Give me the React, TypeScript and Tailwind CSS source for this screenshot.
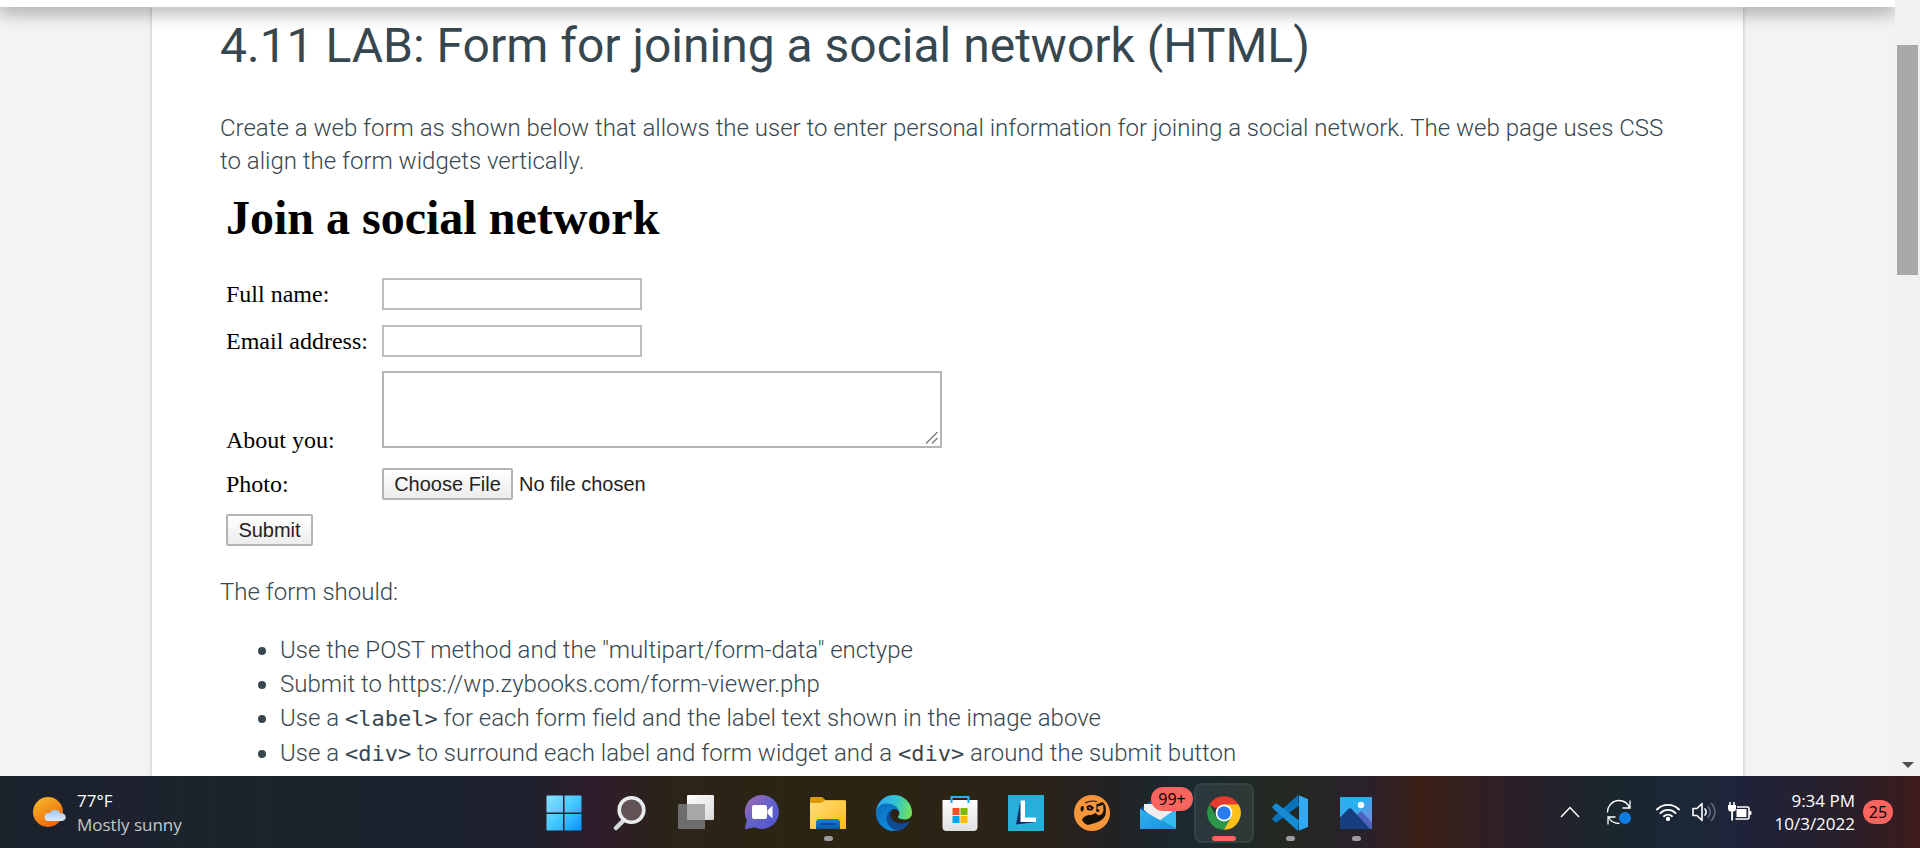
import type { ReactNode } from "react";
import clsx from "clsx";

function Header() {
	return <header className="relative z-10 h-[7px] shrink-0 bg-white shadow-[0_2px_18px_2px_rgba(0,0,0,0.45)]" />;
}

function JoinForm() {
	return (
		<form
			className="mt-3 pl-1.5 font-['Liberation_Serif',serif] text-2xl text-black"
			onSubmit={(e) => e.preventDefault()}
		>
			<h2 className="text-5xl leading-14 font-bold">Join a social network</h2>
			<div className="mt-8 flex h-8 items-center">
				<label htmlFor="fullName" className="w-39 leading-8">
					Full name:
				</label>
				<input id="fullName" type="text" className="h-8 w-[260px] border-2 border-[#bdbdbd] bg-white px-1" />
			</div>
			<div className="mt-[15px] flex h-8 items-center">
				<label htmlFor="email" className="w-39 leading-8">
					Email address:
				</label>
				<input id="email" type="text" className="h-8 w-[260px] border-2 border-[#bdbdbd] bg-white px-1" />
			</div>
			<div className="mt-[14px] flex items-end">
				<label htmlFor="about" className="w-39 leading-4">
					About you:
				</label>
				<div className="relative h-[77px] w-[560px]">
					<textarea id="about" className="h-full w-full resize-none border-2 border-[#b4b4b4] bg-white px-1" />
					<svg className="absolute right-1 bottom-1 h-3 w-3" viewBox="0 0 12 12" stroke="#777" strokeWidth="1.3">
						<path d="M0 11.5 11.5 0M6 11.5 11.5 6" />
					</svg>
				</div>
			</div>
			<div className="mt-5 flex h-8 items-center">
				<label htmlFor="photo" className="w-39 leading-8">
					Photo:
				</label>
				<input
					id="photo"
					type="file"
					className="w-[340px] font-['Liberation_Sans',Arial,sans-serif] text-xl leading-7 text-[#222] file:mr-1.5 file:h-8 file:w-[131px] file:rounded-xs file:border-2 file:border-[#b4b4b4] file:bg-linear-to-b file:from-white file:to-[#ececec] file:p-0 file:text-[#222]"
				/>
			</div>
			<div className="mt-[14px] flex">
				<button
					type="submit"
					className="h-8 w-[87px] rounded-xs border-2 border-[#b4b4b4] bg-linear-to-b from-white to-[#ececec] font-['Liberation_Sans',Arial,sans-serif] text-xl leading-7 text-[#222]"
				>
					Submit
				</button>
			</div>
		</form>
	);
}

function Code({ children }: { children: ReactNode }) {
	return <code className="font-['DejaVu_Sans_Mono',monospace] text-[22px] font-normal">{children}</code>;
}

function Item({ children }: { children: ReactNode }) {
	return (
		<li className="relative before:absolute before:top-[14px] before:-left-[22px] before:size-2 before:rounded-full before:bg-[#37474f]">
			{children}
		</li>
	);
}

function Lab() {
	return (
		<main className="flex min-w-0 flex-1 justify-center overflow-hidden bg-[#f3f3f3]">
			<article className="w-[84%] max-w-[1591px] bg-white px-17 pt-[11px] font-[Roboto,sans-serif] text-2xl leading-[34px] font-light text-[#37474f] shadow-[0_0_4px_rgba(0,0,0,0.25)]">
				<h1 className="text-5xl leading-14 font-normal">4.11 LAB: Form for joining a social network (HTML)</h1>
				<p className="mt-[38px] leading-[33px]">
					Create a web form as shown below that allows the user to enter personal information for joining a social
					network. The web page uses CSS to align the form widgets vertically.
				</p>
				<JoinForm />
				<p className="mt-[30px] leading-[33px]">The form should:</p>
				<ul className="mt-6 pl-15">
					<Item>Use the POST method and the "multipart/form-data" enctype</Item>
					<Item>Submit to https://wp.zybooks.com/form-viewer.php</Item>
					<Item>
						Use a <Code>&lt;label&gt;</Code> for each form field and the label text shown in the image above
					</Item>
					<Item>
						Use a <Code>&lt;div&gt;</Code> to surround each label and form widget and a <Code>&lt;div&gt;</Code> around
						the submit button
					</Item>
				</ul>
			</article>
		</main>
	);
}

function Scrollbar() {
	return (
		<div className="flex w-[25px] shrink-0 flex-col items-center justify-between bg-[#f1f1f1] pt-[45px] pb-2">
			<div className="h-[230px] w-[21px] bg-[#a8a8a8]" />
			<svg className="h-1.5 w-3" viewBox="0 0 12 6" fill="#505050">
				<path d="M0 0h12L6 6z" />
			</svg>
		</div>
	);
}

function StartIcon() {
	return (
		<svg viewBox="0 0 36 36" className="h-9 w-9">
			<defs>
				<linearGradient id="start" x1="0" y1="0" x2="36" y2="36" gradientUnits="userSpaceOnUse">
					<stop stopColor="#8fe1ff" />
					<stop offset=".5" stopColor="#45c8ff" />
					<stop offset="1" stopColor="#0593ff" />
				</linearGradient>
			</defs>
			<path
				fill="url(#start)"
				d="M1.500 .5H17v17H.5v-16a1 1 0 0 1 1-1zM18.500 .5h16a1 1 0 0 1 1 1v16h-17zM.5 19H17v16.500H1.500a1 1 0 0 1-1-1zM18.500 19h17v15.500a1 1 0 0 1-1 1h-16z"
			/>
		</svg>
	);
}

function SearchIcon() {
	return (
		<svg viewBox="0 0 36 36" className="h-9 w-9">
			<path d="M12 25 4 33" stroke="#d5d9dc" strokeWidth="4.500" strokeLinecap="round" />
			<circle cx="19.500" cy="15" r="12.300" fill="#8c7c80" fillOpacity=".55" stroke="#e9ecee" strokeWidth="3.600" />
		</svg>
	);
}

function TaskViewIcon() {
	return (
		<svg viewBox="0 0 36 36" className="h-9 w-9">
			<defs>
				<linearGradient id="tv" x1="0" y1="0" x2="1" y2="1">
					<stop stopColor="#fff" />
					<stop offset="1" stopColor="#d9d9d9" />
				</linearGradient>
			</defs>
			<rect x="9" y="0" width="27" height="25" rx="1.200" fill="url(#tv)" />
			<rect x="0" y="9" width="27" height="25" rx="1.200" fill="#6d6d6d" />
			<path d="M9 9h18v16H10a1 1 0 0 1-1-1z" fill="#a8a8a8" />
		</svg>
	);
}

function ChatIcon() {
	return (
		<svg viewBox="0 0 36 36" className="h-9 w-9">
			<defs>
				<linearGradient id="chat" x1="4" y1="4" x2="28" y2="30" gradientUnits="userSpaceOnUse">
					<stop stopColor="#9a6ab4" />
					<stop offset=".5" stopColor="#6562c8" />
					<stop offset="1" stopColor="#5558cf" />
				</linearGradient>
			</defs>
			<path fill="url(#chat)" d="M18 0a17 17 0 1 1-7.500 32.300L2.500 34c-1 .2-1.700-.5-1.400-1.500l1.700-7.500A17 17 0 0 1 18 0z" />
			<rect x="8" y="10" width="15" height="14" rx="2" fill="#fff" />
			<path d="M24 15.500 28 11.500v11L24 18.500z" fill="#fff" stroke="#fff" strokeLinejoin="round" />
		</svg>
	);
}

function FolderIcon() {
	return (
		<svg viewBox="0 0 36 36" className="h-9 w-9">
			<defs>
				<linearGradient id="folder" x1="0" y1="0" x2="1" y2="1">
					<stop stopColor="#ffe07a" />
					<stop offset="1" stopColor="#fcb91c" />
				</linearGradient>
				<linearGradient id="folderTab" x1="0" y1="0" x2="0" y2="1">
					<stop stopColor="#1380d8" />
					<stop offset="1" stopColor="#0a5ca8" />
				</linearGradient>
			</defs>
			<path d="M0 3.500A1.500 1.500 0 0 1 1.500 2H12l3.500 3H34a2 2 0 0 1 2 2v10H0z" fill="#dc9a08" />
			<path d="M0 8h11l4-2.500h21v28.500H1a1 1 0 0 1-1-1z" fill="url(#folder)" />
			<path d="M6 34v-6.500A3.500 3.500 0 0 1 9.500 24h17a3.500 3.500 0 0 1 3.500 3.500V34z" fill="url(#folderTab)" />
			<path d="M11 29h14" stroke="#08457f" strokeWidth="1.500" strokeLinecap="round" />
		</svg>
	);
}

function EdgeIcon() {
	return (
		<svg viewBox="0 0 36 36" className="h-9 w-9">
			<defs>
				<linearGradient id="edgeTop" x1="2" y1="10" x2="35" y2="18" gradientUnits="userSpaceOnUse">
					<stop stopColor="#2ea9ed" />
					<stop offset=".5" stopColor="#32c5cf" />
					<stop offset="1" stopColor="#74e456" />
				</linearGradient>
				<linearGradient id="edgeLeft" x1="4" y1="10" x2="18" y2="36" gradientUnits="userSpaceOnUse">
					<stop stopColor="#0d6fc0" />
					<stop offset="1" stopColor="#118ee2" />
				</linearGradient>
			</defs>
			<path
				d="M0 18A18 18 0 0 1 36 18c0 4-3 6.500-7 6.500-3.500 0-7-1-7-2.500 0-.9 1.400-1.500 1.400-4 0-3-3-5-6-5z"
				fill="url(#edgeTop)"
			/>
			<path
				d="M0 18C0 12.500 5 8.500 10.500 8.500c6.500 0 12 3.500 12 7.500-1.500-2-4-2.500-6-1.500-4 2-3.500 8-1 12 3.500 5.500 10 5 17.500 1.200A18 18 0 0 1 18 36 18 18 0 0 1 0 18z"
				fill="url(#edgeLeft)"
			/>
			<path
				d="M16.500 14.500C7.500 18 9 31.500 20 35.900a18 18 0 0 0 13-8.200c.4-.8-.2-1.200-.9-.9-5.600 2.700-12.100 1.700-15.600-1.800-3.200-3.300-2.800-8 0-10.500z"
				fill="#104a95"
			/>
		</svg>
	);
}

function StoreIcon() {
	return (
		<svg viewBox="0 0 36 36" className="h-9 w-9">
			<defs>
				<linearGradient id="store" x1="0" y1="0" x2="0" y2="1">
					<stop stopColor="#fff" />
					<stop offset="1" stopColor="#dedede" />
				</linearGradient>
			</defs>
			<path d="M.5 5h35v27a4 4 0 0 1-4 4h-27a4 4 0 0 1-4-4z" fill="url(#store)" />
			<path d="M9.500 8V2h17v6" fill="none" stroke="#27b4ea" strokeWidth="2.200" strokeLinejoin="round" />
			<path d="M10.500 13h7v7h-7z" fill="#f25022" />
			<path d="M18.500 13h7v7h-7z" fill="#7fba00" />
			<path d="M10.500 21h7v7h-7z" fill="#00a4ef" />
			<path d="M18.500 21h7v7h-7z" fill="#ffb900" />
		</svg>
	);
}

function LockIcon() {
	return (
		<svg viewBox="0 0 36 36" className="h-9 w-9">
			<path d="M0 0h36v36H0z" fill="#27aeda" />
			<path d="M12.500 5.500 8 29.500l20-2.500-13-3z" fill="#0c2f63" />
			<path d="M12.500 5.500h4.500V22.500h11V27H12.500z" fill="#fff" />
		</svg>
	);
}

function StrengthIcon() {
	return (
		<svg viewBox="0 0 36 36" className="h-9 w-9">
			<circle cx="18" cy="18" r="18" fill="#f7953b" />
			<g fill="#16100b">
				<path d="M7 12c1-1.500 2.300-1.500 2.700 0 .4 1.800-.2 4-1.500 4.500-1.500.2-2.200-2.500-1.200-4.500z" />
				<path d="M12.500 12c1-2 4-2.600 5.500-1l2 1.500-1.500 2.500c-2.200 1-4.500.6-5.500-.6z" />
				<path d="M8 24.500c2-3.500 5.500-5 9.500-4.500l4-2 3 2.500 3.500-1.500 1.500-3.500-.5-8c2.800 2 3.500 7.500 2.500 12-1.500 5-6 7-10.500 8.500l-7 2c-3-1-5-2.500-6-5.500z" />
				<path d="M22 9.500 28.500 7l1.500 2-2.500 1.500-4 1z" />
				<path d="M22 14.500h3l.5 2-3 .5z" />
			</g>
			<path d="M11 8c4-2 8-2.500 12-1.500M23 10v5" fill="none" stroke="#16100b" strokeWidth="1.100" />
			<path d="m15 12 1.500 2" stroke="#f7953b" strokeWidth="1.200" />
		</svg>
	);
}

function MailIcon() {
	return (
		<svg viewBox="0 0 36 36" className="h-9 w-9">
			<defs>
				<linearGradient id="mail" x1="0" y1="0" x2="1" y2="1">
					<stop stopColor="#38c5f2" />
					<stop offset="1" stopColor="#147fdc" />
				</linearGradient>
			</defs>
			<path d="M0 14 16 2h4l16 12v8H0z" fill="#0e58a8" />
			<path d="M4 9h28v14l-14 4L4 15z" fill="#eeeeef" />
			<path d="M0 14 36 34H0z" fill="url(#mail)" />
			<path d="M20 25 36 14v20z" fill="#36b7ee" />
			<path d="M0 34V14l20.500 11.500L36 34z" fill="#239de8" fillOpacity=".5" />
		</svg>
	);
}

function ChromeIcon() {
	return (
		<svg viewBox="0 0 36 36" className="h-9 w-9">
			<path d="M18 18 3.450 9.600A16.800 16.800 0 0 1 32.550 9.600z" fill="#e63b2e" />
			<path d="M18 9.600h14.550A16.800 16.800 0 0 1 18 34.800l-3-4 10.300-8.600z" fill="#fcc21b" />
			<path d="M3.450 9.600A16.800 16.800 0 0 0 18 34.800l7.280-12.600L18 18l-7.280 4.200z" fill="#2b9647" />
			<circle cx="18" cy="18" r="8.400" fill="#fff" />
			<circle cx="18" cy="18" r="6.700" fill="#2a7cee" />
		</svg>
	);
}

function CodeIcon() {
	return (
		<svg viewBox="0 0 36 36" className="h-9 w-9">
			<path d="M26 0 1 22.500c-1 1-.9 1.900 0 2.700l2 1.800c.7.600 1.600.6 2.400 0L27 10.500z" fill="#0972b8" />
			<path d="M26 36 1 13.500c-1-1-.9-1.900 0-2.700L3 9c.7-.6 1.600-.6 2.400 0L27 25.500z" fill="#168bd3" />
			<path d="M26 0 36 4v28l-10 4c1-.7 1-1.500 1-2.500v-31C27 1.500 27 .7 26 0z" fill="#32a8f0" />
		</svg>
	);
}

function PhotosIcon() {
	return (
		<svg viewBox="0 0 36 36" className="h-9 w-9">
			<defs>
				<linearGradient id="photos" x1="0" y1="0" x2="1" y2="1">
					<stop offset=".4" stopColor="#2baff0" />
					<stop offset="1" stopColor="#8b7fd8" />
				</linearGradient>
			</defs>
			<rect x="2" y="2" width="32" height="32" rx="1" fill="url(#photos)" />
			<path d="m15 24 6.500-6.500c1-1 2-1 3 0L34 27.500V34H20z" fill="#4d63be" />
			<path d="M2 22.500 10.300 14c1-1 2.400-1 3.400 0L32 34H2z" fill="#173f80" />
			<circle cx="23" cy="10" r="3.200" fill="#f4f8fb" />
		</svg>
	);
}

interface TaskbarApp {
	name: string;
	icon: ReactNode;
	state?: "open" | "active";
	badge?: string;
}

const apps: TaskbarApp[] = [
	{ name: "Start", icon: <StartIcon /> },
	{ name: "Search", icon: <SearchIcon /> },
	{ name: "Task View", icon: <TaskViewIcon /> },
	{ name: "Chat", icon: <ChatIcon /> },
	{ name: "File Explorer", icon: <FolderIcon />, state: "open" },
	{ name: "Edge", icon: <EdgeIcon /> },
	{ name: "Store", icon: <StoreIcon /> },
	{ name: "LockDown Browser", icon: <LockIcon /> },
	{ name: "Strength", icon: <StrengthIcon /> },
	{ name: "Mail", icon: <MailIcon />, badge: "99+" },
	{ name: "Chrome", icon: <ChromeIcon />, state: "active" },
	{ name: "Code", icon: <CodeIcon />, state: "open" },
	{ name: "Photos", icon: <PhotosIcon />, state: "open" },
];

function Weather() {
	return (
		<button className="flex items-center gap-[11px] pl-8 text-left">
			<svg viewBox="0 0 34 32" className="h-8 w-[34px]">
				<defs>
					<linearGradient id="sun" x1="0" y1="0" x2=".6" y2="1">
						<stop stopColor="#f5be2a" />
						<stop offset="1" stopColor="#f0660c" />
					</linearGradient>
					<linearGradient id="cloud" x1="0" y1="0" x2="0" y2="1">
						<stop stopColor="#a0c3f6" />
						<stop offset="1" stopColor="#dcebff" />
					</linearGradient>
				</defs>
				<circle cx="16" cy="16" r="15" fill="url(#sun)" />
				<path
					d="M16.500 25a4 4 0 0 1 0-8c.6 0 1 .1 1.400.2a5.500 5.500 0 0 1 10.400.3A3.900 3.900 0 1 1 30 25z"
					fill="url(#cloud)"
				/>
			</svg>
			<div className="pt-0.5 leading-6">
				<div>77°F</div>
				<div className="text-[#c4c8cb]">Mostly sunny</div>
			</div>
		</button>
	);
}

function Tray() {
	return (
		<div className="flex items-center justify-end pr-[27px]">
			<button aria-label="Show hidden icons" className="mr-[26px]">
				<svg viewBox="0 0 20 12" className="h-3 w-5" fill="none" stroke="#fff" strokeWidth="1.500">
					<path d="m1 11 9-9.500L19 11" />
				</svg>
			</button>
			<button aria-label="Updates" className="mr-6">
				<svg viewBox="0 0 26 26" className="h-[26px] w-[26px]" fill="none" stroke="#fff" strokeWidth="1.300">
					<path d="M1.500 13.500C1.500 7 6.500 1.500 13 1.500c4.500 0 8.500 2.500 10.500 7M24 1.500v7.500h-7.500M2 25.500v-7.500h7.500M2.500 18.500c2.200 3.500 6 6 11 6" />
					<circle cx="19" cy="19" r="6" fill="#0f7be0" stroke="none" />
				</svg>
			</button>
			<button aria-label="Network, volume and battery" className="mr-[22px] flex items-center gap-3">
				<svg viewBox="0 0 24 18" className="h-[18px] w-6" fill="none" stroke="#fff" strokeWidth="1.900" strokeLinecap="round">
					<path d="M1 6.500a15.500 15.500 0 0 1 22 0M4.500 10a10.500 10.500 0 0 1 15 0M8 13.200a5.800 5.800 0 0 1 8 0" />
					<circle cx="12" cy="16" r="1.200" fill="#fff" />
				</svg>
				<svg viewBox="0 0 24 20" className="h-5 w-6" fill="none" stroke="#fff" strokeWidth="1.600" strokeLinecap="round" strokeLinejoin="round">
					<path d="M1 6.500h4L10 1.500v17l-5-5H1zM13 7c1.500 2 1.500 4 0 6" />
					<path d="M16 4.500c3 3.500 3 7.500 0 11M19.500 1.500c4.500 5 4.500 12 0 17" stroke="#646a7c" />
				</svg>
				<svg viewBox="0 0 24 20" className="h-5 w-6" fill="none" stroke="#fff" strokeWidth="1.600">
					<path d="M9 5h10.500A1.500 1.500 0 0 1 21 6.500v9a1.500 1.500 0 0 1-1.500 1.500H7.500" />
					<path d="M8.500 7h10v8h-10z" fill="#fff" stroke="none" />
					<path d="M21 9h1.500a1 1 0 0 1 1 1v2a1 1 0 0 1-1 1H21z" fill="#fff" stroke="none" />
					<path d="M0 3h8v3.500a3 3 0 0 1-3 3v9H3.200v-9A3 3 0 0 1 0 6.500zM1.200 0h1.600v3H1.200zM5.200 0h1.600v3H5.200z" fill="#fff" stroke="none" />
				</svg>
			</button>
			<button className="flex items-center gap-2">
				<span className="text-right leading-[23px]">
					<span className="block">9:34 PM</span>
					<span className="block">10/3/2022</span>
				</span>
				<span className="h-6 w-[30px] rounded-full bg-[#f9645f] text-center text-base leading-6 text-black">25</span>
			</button>
		</div>
	);
}

function Taskbar() {
	return (
		<footer className="grid h-[72px] shrink-0 grid-cols-[1fr_auto_1fr] bg-[linear-gradient(90deg,#1b232d_0%,#1d222e_7%,#1a252b_12%,#1b222e_23%,#20202d_28%,#301d2c_31%,#2b2418_35%,#2c2413_42%,#2b2416_50%,#2b2219_54%,#222224_58%,#192a30_62%,#242820_67%,#29212c_71%,#3a1f15_74%,#2b202a_79%,#1a272d_84%,#1b2739_88%,#202339_91%,#29202b_96%,#3d1b1a_100%)] font-['Open_Sans','Segoe_UI',sans-serif] text-[17px] text-white">
			<Weather />
			<nav className="flex items-center gap-1.5 pt-0.5">
				{apps.map((app) => (
					<button
						key={app.name}
						aria-label={app.name}
						className={clsx(
							"relative flex h-15 w-15 items-center justify-center rounded-lg",
							app.state === "active" && "border-2 border-white/5 bg-white/7"
						)}
					>
						{app.icon}
						{app.badge && (
							<span className="absolute top-1 -right-[5px] z-10 h-6 w-[42px] rounded-full bg-[#f9645f] text-center text-base leading-6 text-black">
								{app.badge}
							</span>
						)}
						{app.state === "open" && <span className="absolute bottom-0.5 h-[5px] w-[9px] rounded-full bg-[#a09ba1]" />}
						{app.state === "active" && <span className="absolute bottom-0 h-[5px] w-6 rounded-full bg-[#f9645f]" />}
					</button>
				))}
			</nav>
			<Tray />
		</footer>
	);
}

export default function App() {
	return (
		<div className="flex h-screen flex-col overflow-hidden bg-[#f3f3f3]">
			<div className="flex min-h-0 flex-1">
				<div className="flex min-w-0 flex-1 flex-col overflow-hidden">
					<Header />
					<Lab />
				</div>
				<Scrollbar />
			</div>
			<Taskbar />
		</div>
	);
}
